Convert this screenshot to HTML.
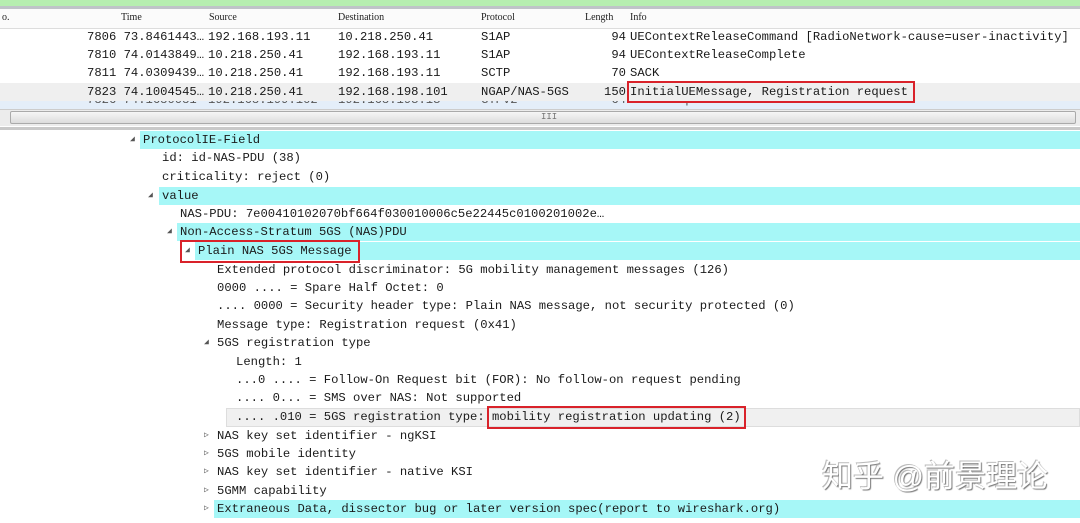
<!DOCTYPE html>
<html><head><meta charset="utf-8"><style>
*{margin:0;padding:0;box-sizing:border-box}
body{width:1080px;height:523px;overflow:hidden;background:#fff;position:relative;font-family:"Liberation Mono",monospace;font-size:12.2px;color:#1a1a1a}
.a{position:absolute;white-space:pre;line-height:18px}
.hd{position:absolute;top:12px;font-family:"Liberation Serif",serif;font-size:10px;color:#222;white-space:pre}
.cy{position:absolute;background:#a6f7f7;height:18px;right:0}
.tri{position:absolute;font-size:8px;color:#555;line-height:18px}
.box{position:absolute;border:2px solid #d9222a}
.r{position:absolute;left:0;width:1080px;height:18px}
.r span{position:absolute;white-space:pre;line-height:18px;top:0}
.n{left:87px}.t{left:123px}.s{left:208px}.d{left:338px}.p{left:481px}.l{right:454px;text-align:right}.i{left:630px}
</style></head><body>
<div style="position:absolute;left:0;top:0;width:1080px;height:6px;background:#b6eeb0"></div>
<div style="position:absolute;left:0;top:6px;width:1080px;height:3px;background:#bfc3c8"></div>
<div style="position:absolute;left:0;top:9px;width:1080px;height:20px;background:#fbfbfb;border-bottom:1px solid #ddd"></div>
<div class="hd" style="left:2px">o.</div>
<div class="hd" style="left:121px">Time</div>
<div class="hd" style="left:209px">Source</div>
<div class="hd" style="left:338px">Destination</div>
<div class="hd" style="left:481px">Protocol</div>
<div class="hd" style="left:585px">Length</div>
<div class="hd" style="left:630px">Info</div>
<div style="position:absolute;left:0;top:83px;width:1080px;height:18px;background:#efefef"></div>
<div style="position:absolute;left:0;top:101px;width:1080px;height:8px;background:#e4eef9;overflow:hidden">
<div class="r" style="top:-10px;color:#555"><span class="n">7826 74.1680081</span><span class="s">192.168.199.102</span><span class="d">192.168.193.13</span><span class="p">GTPv2</span><span class="l">64</span><span class="i">Echo Request</span></div></div>
<div class="r" style="top:28px"><span class="n">7806 73.8461443…</span><span class="s">192.168.193.11</span><span class="d">10.218.250.41</span><span class="p">S1AP</span><span class="l">94</span><span class="i">UEContextReleaseCommand [RadioNetwork-cause=user-inactivity]</span></div>
<div class="r" style="top:46px"><span class="n">7810 74.0143849…</span><span class="s">10.218.250.41</span><span class="d">192.168.193.11</span><span class="p">S1AP</span><span class="l">94</span><span class="i">UEContextReleaseComplete</span></div>
<div class="r" style="top:64px"><span class="n">7811 74.0309439…</span><span class="s">10.218.250.41</span><span class="d">192.168.193.11</span><span class="p">SCTP</span><span class="l">70</span><span class="i">SACK</span></div>
<div class="r" style="top:83px"><span class="n">7823 74.1004545…</span><span class="s">10.218.250.41</span><span class="d">192.168.198.101</span><span class="p">NGAP/NAS-5GS</span><span class="l">150</span><span class="i">InitialUEMessage, Registration request</span></div>
<div class="box" style="left:627px;top:81px;width:288px;height:22px"></div>
<div style="position:absolute;left:0;top:109px;width:1080px;height:17px;background:#ececec;border-top:1px solid #ccc"></div>
<div style="position:absolute;left:10px;top:111px;width:1066px;height:13px;background:linear-gradient(#f6f6f6,#dcdcdc);border:1px solid #aaa;border-radius:2px"></div>
<div class="a" style="left:541px;top:108px;font-size:9px;color:#777">III</div>
<div style="position:absolute;left:0;top:127px;width:1080px;height:3px;background:#c9c9c9"></div>

<div class="cy" style="left:140px;top:131px"></div>
<div class="tri" style="left:130px;top:131px">◢</div><div class="a" style="left:143px;top:131px">ProtocolIE-Field</div>
<div class="a" style="left:162px;top:149px">id: id-NAS-PDU (38)</div>
<div class="a" style="left:162px;top:168px">criticality: reject (0)</div>
<div class="cy" style="left:159px;top:187px"></div>
<div class="tri" style="left:148px;top:187px">◢</div><div class="a" style="left:162px;top:187px">value</div>
<div class="a" style="left:180px;top:205px">NAS-PDU: 7e00410102070bf664f030010006c5e22445c0100201002e…</div>
<div class="cy" style="left:177px;top:223px"></div>
<div class="tri" style="left:167px;top:223px">◢</div><div class="a" style="left:180px;top:223px">Non-Access-Stratum 5GS (NAS)PDU</div>
<div class="cy" style="left:195px;top:242px"></div>
<div class="tri" style="left:185px;top:242px">◢</div><div class="a" style="left:198px;top:242px">Plain NAS 5GS Message</div>
<div class="box" style="left:180px;top:240px;width:180px;height:23px"></div>
<div class="a" style="left:217px;top:261px">Extended protocol discriminator: 5G mobility management messages (126)</div>
<div class="a" style="left:217px;top:279px">0000 .... = Spare Half Octet: 0</div>
<div class="a" style="left:217px;top:297px">.... 0000 = Security header type: Plain NAS message, not security protected (0)</div>
<div class="a" style="left:217px;top:316px">Message type: Registration request (0x41)</div>
<div class="tri" style="left:204px;top:334px">◢</div><div class="a" style="left:217px;top:334px">5GS registration type</div>
<div class="a" style="left:236px;top:353px">Length: 1</div>
<div class="a" style="left:236px;top:371px">...0 .... = Follow-On Request bit (FOR): No follow-on request pending</div>
<div class="a" style="left:236px;top:389px">.... 0... = SMS over NAS: Not supported</div>
<div style="position:absolute;left:226px;top:408px;right:0;height:19px;background:#f0f0f0;border:1px solid #ddd"></div>
<div class="a" style="left:236px;top:408px">.... .010 = 5GS registration type: mobility registration updating (2)</div>
<div class="box" style="left:487px;top:406px;width:259px;height:23px"></div>
<div class="tri" style="left:204px;top:427px">▷</div><div class="a" style="left:217px;top:427px">NAS key set identifier - ngKSI</div>
<div class="tri" style="left:204px;top:445px">▷</div><div class="a" style="left:217px;top:445px">5GS mobile identity</div>
<div class="tri" style="left:204px;top:463px">▷</div><div class="a" style="left:217px;top:463px">NAS key set identifier - native KSI</div>
<div class="tri" style="left:204px;top:482px">▷</div><div class="a" style="left:217px;top:482px">5GMM capability</div>
<div class="cy" style="left:214px;top:500px"></div>
<div class="tri" style="left:204px;top:500px">▷</div><div class="a" style="left:217px;top:500px">Extraneous Data, dissector bug or later version spec(report to wireshark.org)</div>
<div class="a" style="left:822px;top:457px;font-family:'Liberation Sans','Noto Sans CJK SC',sans-serif;font-size:31px;line-height:40px;color:#fff;text-shadow:1px 1px 1px #777,-1px -1px 0 #bbb">知乎 @前景理论</div>
</body></html>
